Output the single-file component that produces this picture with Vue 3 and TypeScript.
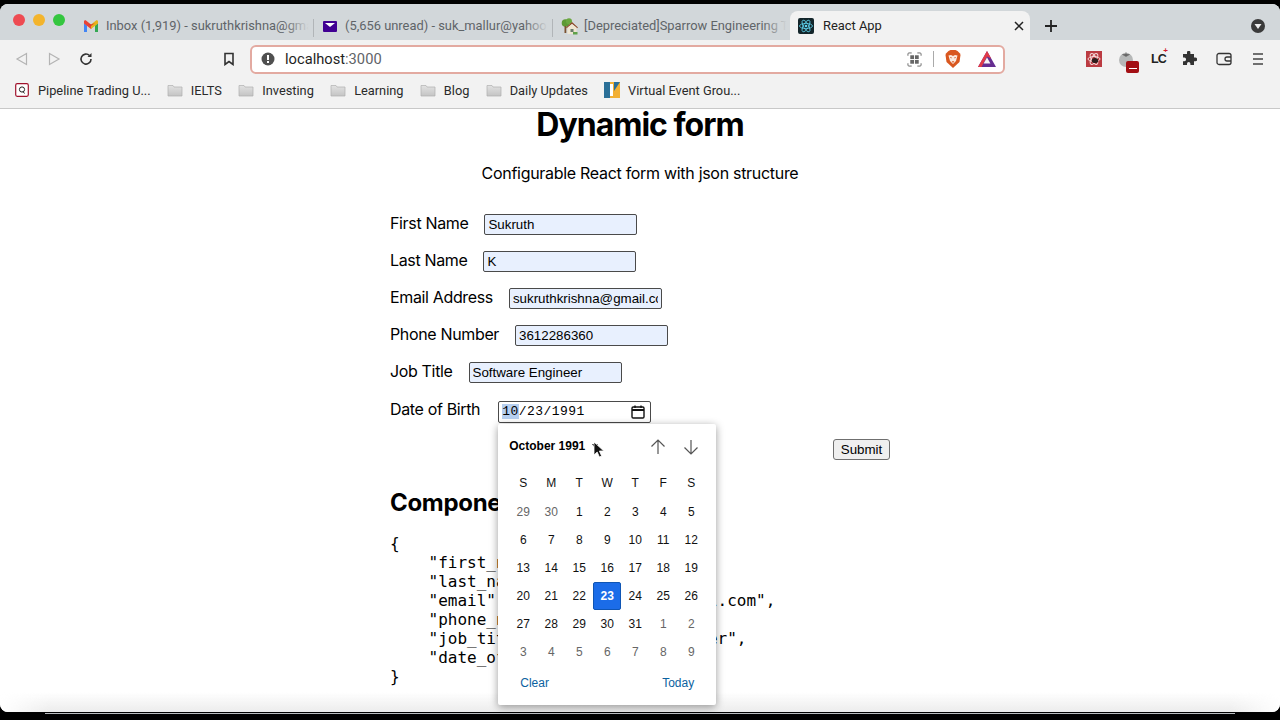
<script setup lang="ts">
interface Field { label: string; value: string }
interface Tab { title: string; icon: string; width: number }
interface Mark { label: string; icon: string }
interface Day { n: number; muted?: boolean; selected?: boolean }

const tabs: Tab[] = [
  { title: 'Inbox (1,919) - sukruthkrishna@gmail.com', icon: 'gmail', width: 239 },
  { title: '(5,656 unread) - suk_mallur@yahoo.com', icon: 'yahoo', width: 239 },
  { title: '[Depreciated]Sparrow Engineering Team', icon: 'home', width: 239 },
]
const marks: Mark[] = [
  { label: 'Pipeline Trading U...', icon: 'q' },
  { label: 'IELTS', icon: 'folder' },
  { label: 'Investing', icon: 'folder' },
  { label: 'Learning', icon: 'folder' },
  { label: 'Blog', icon: 'folder' },
  { label: 'Daily Updates', icon: 'folder' },
  { label: 'Virtual Event Grou...', icon: 'flag' },
]
const fields: Field[] = [
  { label: 'First Name', value: 'Sukruth' },
  { label: 'Last Name', value: 'K' },
  { label: 'Email Address', value: 'sukruthkrishna@gmail.com' },
  { label: 'Phone Number', value: '3612286360' },
  { label: 'Job Title', value: 'Software Engineer' },
]
const weekdays = ['S', 'M', 'T', 'W', 'T', 'F', 'S']
const days: Day[] = [
  ...[29, 30].map((n) => ({ n, muted: true })),
  ...Array.from({ length: 31 }, (_, i) => ({ n: i + 1, selected: i + 1 === 23 })),
  ...[1, 2, 3, 4, 5, 6, 7, 8, 9].map((n) => ({ n, muted: true })),
]
const json = `{
    "first_name": "Sukruth",
    "last_name": "K",
    "email": "sukruthkrishna@gmail.com",
    "phone_number": "3612286360",
    "job_title": "Software Engineer",
    "date_of_birth": "1991-10-23"
}`
</script>

<template>
  <div class="screen">
    <div class="window">
      <div class="tabbar">
        <div class="lights">
          <span class="light red"></span><span class="light yellow"></span><span class="light green"></span>
        </div>
        <div v-for="t in tabs" :key="t.icon" class="tab" :style="{ width: t.width + 'px' }">
          <svg v-if="t.icon === 'gmail'" class="fav" viewBox="0 0 16 16">
            <path d="M1 5v9h3V7.500z" fill="#4285f4" />
            <path d="M12 7.500V14h3V5z" fill="#34a853" />
            <path d="M1 3.500C1 2.500 2.500 2 3.300 2.700L8 6.500l1 3-1 1.500L1 5.500z" fill="#ea4335" />
            <path d="M8 6.500l4.700-3.800C13.500 2 15 2.500 15 3.500v2L8 11z" fill="#e8b21c" />
            <path d="M12 4.900 8 8 5 6l3 .5z" fill="#d93a2f" />
          </svg>
          <svg v-else-if="t.icon === 'yahoo'" class="fav" viewBox="0 0 16 16">
            <rect x="1" y="3" width="14" height="11" rx="1" fill="#410093" />
            <path d="M3 5h10L8 9z" fill="#fff" />
          </svg>
          <svg v-else class="fav home" viewBox="0 0 17 18">
            <circle cx="4.500" cy="6" r="3.800" fill="#5d9a34" />
            <circle cx="8" cy="4.200" r="3" fill="#6aa83f" />
            <path d="M3.500 9h1.800v7H3.500z" fill="#7a5230" />
            <path d="M5 10.500 11 5l6 5.500-1 .8L11 7l-5 4.300z" fill="#8c4a2b" />
            <path d="M6.500 10.500 11 7l4.500 3.500V17h-9z" fill="#efe6d2" />
            <path d="M9.500 12h3v3h-3z" fill="#6b7b6d" />
            <path d="M12 15h4.500v2.500H12z" fill="#5fa24a" />
          </svg>
          <span class="tab-title">{{ t.title }}</span>
          <span class="tab-fade"></span>
        </div>
        <div class="tab active">
          <svg class="fav" viewBox="0 0 16 16">
            <rect width="16" height="16" rx="2" fill="#14262b" />
            <g fill="none" stroke="#5fd3ee" stroke-width=".8">
              <ellipse cx="8" cy="8" rx="6.500" ry="2.600" />
              <ellipse cx="8" cy="8" rx="6.500" ry="2.600" transform="rotate(60 8 8)" />
              <ellipse cx="8" cy="8" rx="6.500" ry="2.600" transform="rotate(120 8 8)" />
            </g>
            <circle cx="8" cy="8" r="1.300" fill="#5fd3ee" />
          </svg>
          <span class="tab-title dark">React App</span>
          <svg class="close" viewBox="0 0 10 10"><path d="M1 1l8 8M9 1l-8 8" stroke="#222" stroke-width="1.500" /></svg>
        </div>
        <svg class="plus" viewBox="0 0 14 14"><path d="M7 1v12M1 7h12" stroke="#222" stroke-width="1.800" /></svg>
        <svg class="tab-menu" viewBox="0 0 16 16">
          <circle cx="8" cy="8" r="7" fill="#3a3a3a" />
          <path d="M4.500 6h7L8 11z" fill="#eee" />
        </svg>
      </div>

      <div class="toolbar">
        <svg class="nav first" viewBox="0 0 14 14"><path d="M11.500 1.500v11L2 7z" fill="none" stroke="#b4b4b4" stroke-width="1.200" /></svg>
        <svg class="nav" viewBox="0 0 14 14"><path d="M2.500 1.500v11L12 7z" fill="none" stroke="#b4b4b4" stroke-width="1.200" /></svg>
        <svg class="nav" viewBox="0 0 14 14"><path d="M12 7a5 5 0 1 1-1.500-3.500" fill="none" stroke="#333" stroke-width="1.600" /><path d="M12.500 1v4h-4z" fill="#333" /></svg>
        <svg class="bookmark" viewBox="0 0 12 14"><path d="M2 1.500h8v11L6 9.500l-4 3z" fill="none" stroke="#333" stroke-width="1.600" /></svg>
        <div class="omnibox">
          <svg class="info" viewBox="0 0 14 14">
            <circle cx="7" cy="7" r="6.500" fill="#505050" />
            <rect x="6" y="3" width="2" height="5" fill="#fff" />
            <rect x="6" y="9" width="2" height="2" fill="#fff" />
          </svg>
          <span class="url">localhost<span class="port">:3000</span></span>
          <svg class="qr" viewBox="0 0 16 16">
            <path d="M1 4V2a1 1 0 0 1 1-1h3M11 1h3a1 1 0 0 1 1 1v2M15 12v2a1 1 0 0 1-1 1h-3M5 15H2a1 1 0 0 1-1-1v-2" fill="none" stroke="#666" stroke-width="1" />
            <rect x="3.500" y="3.500" width="4" height="4" fill="#666" /><rect x="8.500" y="3.500" width="4" height="4" fill="#666" />
            <rect x="3.500" y="8.500" width="4" height="4" fill="#666" /><rect x="8.500" y="8.500" width="4" height="4" fill="#666" />
          </svg>
          <span class="omni-sep"></span>
          <svg class="brave" viewBox="0 0 16 18">
            <path d="M3.500 1 5.500 0h5l2 1L15 3.500l.5 1.500-1 7L8 18l-6.500-6-1-7L1 3.500z" fill="#d9571f" />
            <path d="M3.500 5.500 6 5l2 1 2-1 2.500.5-1.500 5.500L8 14l-3-3z" fill="#fbeadf" />
            <path d="M4.800 7l2 .6-.6 1zM11.200 7l-2 .6.600 1z" fill="#c74a18" />
            <path d="M6.700 11.300h2.600L8 13z" fill="#d9571f" />
          </svg>
          <svg class="bat" viewBox="0 0 18 16">
            <path d="M9 0 18 16H0z" fill="#662d91" />
            <path d="M9 0l4.200 7.500L9 5.500 5.500 12 3.600 16H0z" fill="#e23b48" />
            <path d="M9 6.500l3.400 6H5.600z" fill="#f6f6f6" />
          </svg>
        </div>
        <div class="ext-group">
          <svg class="ext first-ext" viewBox="0 0 16 16">
            <rect width="16" height="16" fill="#bb3b42" />
            <g fill="none" stroke="#f3d6d6" stroke-width="1">
              <ellipse cx="8" cy="8" rx="6" ry="2.500" />
              <ellipse cx="8" cy="8" rx="6" ry="2.500" transform="rotate(60 8 8)" />
              <ellipse cx="8" cy="8" rx="6" ry="2.500" transform="rotate(120 8 8)" />
            </g>
            <ellipse cx="9" cy="9.500" rx="3.200" ry="2.600" fill="#2f1d1d" />
          </svg>
          <div class="tomato">
            <svg viewBox="0 0 16 16">
              <circle cx="8" cy="9" r="7" fill="#b6b8b8" />
              <path d="M8 1v2M4.500 3.500 8 3l3.500.5L8 5.500z" fill="#666" stroke="#666" stroke-width=".6" />
            </svg>
            <span class="tomato-badge"><span class="tomato-bar"></span></span>
          </div>
          <span class="lc">LC<span class="lc-plus">+</span></span>
          <svg class="ext puzzle" viewBox="0 0 16 16">
            <path d="M6 1.500a1.700 1.700 0 0 1 3.400 0V3H13v3.600h1.400a1.800 1.800 0 0 1 0 3.600H13V14H9.400v-1.300a1.700 1.700 0 0 0-3.400 0V14H2v-3.800h1.300a1.800 1.800 0 0 0 0-3.600H2V3h4z" fill="#333" />
          </svg>
          <svg class="ext" viewBox="0 0 16 16">
            <rect x="1" y="2.500" width="14" height="11" rx="2" fill="none" stroke="#333" stroke-width="1.300" />
            <path d="M15 6h-4a2 2 0 0 0 0 4h4" fill="none" stroke="#333" stroke-width="1.300" />
          </svg>
          <svg class="ext" viewBox="0 0 16 16">
            <path d="M3 3h10M3 8h10M3 13h10" stroke="#444" stroke-width="1.500" />
          </svg>
        </div>
      </div>

      <div class="bookmarks">
        <div v-for="m in marks" :key="m.label" class="mark">
          <svg v-if="m.icon === 'q'" class="mark-icon small" viewBox="0 0 14 14">
            <rect x=".7" y=".7" width="12.600" height="12.600" rx="1.500" fill="#fff" stroke="#a0122c" stroke-width="1.200" />
            <circle cx="7" cy="6.500" r="2.600" fill="none" stroke="#222" stroke-width="1" />
            <path d="M8 8.500l1.500 2" stroke="#222" stroke-width="1" />
          </svg>
          <svg v-else-if="m.icon === 'folder'" class="mark-icon" viewBox="0 0 16 14">
            <defs>
              <linearGradient id="fold" x1="0" y1="0" x2="0" y2="1">
                <stop offset="0" stop-color="#e2e2e2" /><stop offset="1" stop-color="#c4c4c4" />
              </linearGradient>
            </defs>
            <path d="M1 2.500h5l1 1.500h8v9H1z" fill="url(#fold)" stroke="#b0b0b0" stroke-width=".7" />
          </svg>
          <svg v-else class="mark-icon tall" viewBox="0 0 16 16">
            <rect width="16" height="16" fill="#f2b035" />
            <path d="M0 0h6v16H0z" fill="#2a6f97" />
            <path d="M16 0 10 9V0z" fill="#2a6f97" />
            <path d="M6 2h3v12H6z" fill="#fff" />
          </svg>
          <span>{{ m.label }}</span>
        </div>
      </div>

      <main class="page">
        <h1>Dynamic form</h1>
        <p class="lead">Configurable React form with json structure</p>
        <form class="form" @submit.prevent>
          <div v-for="f in fields" :key="f.label" class="row">
            <label class="label">{{ f.label }}</label>
            <input class="input" type="text" readonly :value="f.value" />
          </div>
          <div class="row last">
            <label class="label">Date of Birth</label>
            <div class="date">
              <span class="date-text"><span class="seg">10</span>/23/1991</span>
              <svg class="cal-icon" viewBox="0 0 14 14">
                <rect x="1" y="2" width="12" height="11" rx="1.200" fill="none" stroke="#111" stroke-width="1.400" />
                <path d="M1 5h12" stroke="#111" stroke-width="2" />
                <path d="M4 .5v2.500M10 .5v2.500" stroke="#111" stroke-width="1.400" />
              </svg>
              <div class="popup">
                <div class="popup-head">
                  <span class="month">October 1991</span>
                  <span class="caret"></span>
                  <svg class="arrow up" viewBox="0 0 16 16"><path d="M8 15V1M1.500 7.500 8 1l6.500 6.500" fill="none" stroke="#555" stroke-width="1.200" /></svg>
                  <svg class="arrow down" viewBox="0 0 16 16"><path d="M8 1v14M1.500 8.500 8 15l6.500-6.500" fill="none" stroke="#555" stroke-width="1.200" /></svg>
                  <svg class="cursor" viewBox="0 0 12 18">
                    <path d="M1 1v13l3.200-3 2.200 5 2.200-1-2.200-5h4.400z" fill="#111" stroke="#fff" stroke-width=".8" />
                  </svg>
                </div>
                <div class="grid">
                  <span v-for="(w, i) in weekdays" :key="i" class="cell">{{ w }}</span>
                </div>
                <div class="grid days">
                  <span
                    v-for="(d, i) in days"
                    :key="i"
                    class="cell"
                    :class="{ muted: d.muted, selected: d.selected }"
                  >{{ d.n }}</span>
                </div>
                <div class="popup-foot"><span>Clear</span><span>Today</span></div>
              </div>
            </div>
          </div>
          <button class="submit" type="button">Submit</button>
        </form>
        <h2>Component state</h2>
        <pre class="json">{{ json }}</pre>
      </main>
      <div class="page-edge"></div>
    </div>
    <div class="bottom-line"></div>
  </div>
</template>

<style>
html, body { margin: 0; background: #000; }
</style>

<style scoped>
.screen {
  width: 1280px;
  height: 720px;
  overflow: hidden;
  background: #000;
  display: flex;
  flex-direction: column;
  font-family: "Liberation Sans", Arial, sans-serif;
}
.window {
  margin-top: 4px;
  height: 708px;
  flex: none;
  position: relative;
  display: flex;
  flex-direction: column;
  overflow: hidden;
  border-radius: 8px;
  background: #fff;
}
.bottom-line { height: 1px; margin: 1px 45px 0; background: #b9bcc0; flex: none; }

.tabbar {
  height: 36px;
  flex: none;
  background: #d2d7da;
  display: flex;
  align-items: flex-end;
  position: relative;
}
.lights { display: flex; gap: 8px; width: 75px; padding-left: 13px; box-sizing: border-box; align-self: flex-start; margin-top: 10px; }
.light { width: 12px; height: 12px; border-radius: 50%; }
.red { background: #ee4b52; }
.yellow { background: #f3b42c; }
.green { background: #34c63f; }
.tab {
  height: 29px;
  display: flex;
  align-items: center;
  position: relative;
  box-sizing: border-box;
  padding-left: 8px;
  overflow: hidden;
  flex: none;
}
.tab:not(.active)::after {
  content: "";
  position: absolute;
  right: 0;
  top: 8px;
  bottom: 3px;
  width: 1px;
  background: #b1b5b8;
}
.tab-fade {
  position: absolute;
  right: 1px;
  top: 0;
  bottom: 0;
  width: 28px;
  background: linear-gradient(90deg, rgba(210, 215, 218, 0), #d2d7da 85%);
}
.fav { width: 16px; height: 16px; flex: none; margin-right: 7px; }
.home { width: 17px; height: 18px; margin-right: 6px; }
.tab-title { font-size: 12.9px; color: #5f6468; white-space: nowrap; font-family: Roboto, "Liberation Sans", sans-serif; }
.tab-title.dark { color: #222; }
.tab.active {
  width: 240px;
  margin-left: -2px;
  background: #f2f2f2;
  border-radius: 8px 8px 0 0;
}
.active .fav { margin-right: 9px; }
.close { width: 10px; height: 10px; position: absolute; right: 6px; top: 10px; }
.plus { width: 14px; height: 14px; margin: 0 0 7px 14px; flex: none; }
.tab-menu { width: 16px; height: 16px; position: absolute; right: 14px; top: 14px; }

.toolbar {
  height: 38px;
  flex: none;
  background: #f2f2f2;
  display: flex;
  align-items: center;
  box-sizing: border-box;
  padding-left: 15px;
}
.nav { width: 14px; height: 14px; margin-right: 18px; flex: none; }
.bookmark { width: 12px; height: 14px; margin-left: 112px; margin-right: 15px; flex: none; }
.omnibox {
  width: 755px;
  height: 29px;
  box-sizing: border-box;
  border: 2px solid #e3aaa1;
  border-radius: 6px;
  background: #fff;
  display: flex;
  align-items: center;
  padding-left: 9px;
  flex: none;
}
.info { width: 14px; height: 14px; flex: none; margin-right: 10px; }
.url { font-size: 14.7px; color: #1f1f1f; font-family: Roboto, "Liberation Sans", sans-serif; }
.port { color: #5f6368; }
.qr { width: 15px; height: 15px; margin-left: auto; flex: none; }
.omni-sep { width: 1px; height: 16px; background: #aaa; margin: 0 11px; }
.brave { width: 16px; height: 18px; flex: none; margin-right: 17px; }
.bat { width: 18px; height: 16px; flex: none; margin-right: 7px; }
.ext-group {
  display: flex;
  align-items: center;
  margin-left: 81px;
}
.ext { width: 16px; height: 16px; flex: none; margin-right: 18px; }
.first-ext { margin-right: 16px; }
.puzzle { margin-right: 19px; }
.tomato { width: 16px; height: 16px; position: relative; margin-right: 17px; flex: none; }
.tomato svg { width: 16px; height: 16px; display: block; }
.tomato-badge {
  position: absolute;
  left: 8px;
  top: 10px;
  width: 13px;
  height: 12px;
  background: #a30f14;
  border-radius: 2px;
  display: flex;
  align-items: center;
  justify-content: center;
}
.tomato-bar { width: 8px; height: 1px; background: #fff; margin-top: 2px; }
.lc { font-size: 12.5px; font-weight: 700; color: #222; width: 16px; margin-right: 14px; position: relative; letter-spacing: -1px; flex: none; }
.lc-plus { position: absolute; right: 0; top: -6px; font-size: 8px; color: #d02030; }

.bookmarks {
  height: 31px;
  flex: none;
  box-sizing: border-box;
  background: #f2f2f2;
  border-bottom: 1px solid #c8c8c8;
  display: flex;
  align-items: center;
  padding: 0 0 6px 15px;
  font-size: 12.8px;
  font-family: Roboto, "Liberation Sans", sans-serif;
  color: #2a2a2a;
}
.mark { display: flex; align-items: center; margin-right: 16.3px; white-space: nowrap; }
.mark-icon { width: 16px; height: 14px; margin-right: 8px; flex: none; }
.mark-icon.small { width: 14px; height: 14px; margin-right: 9px; }
.mark-icon.tall { height: 16px; }

.page {
  flex: 1;
  min-height: 0;
  position: relative;
  background: #fff;
  color: #000;
}
h1 {
  margin: -3px 0 0;
  font: 700 32px/37px Inter, "Liberation Sans", sans-serif;
  letter-spacing: -1px;
  text-align: center;
}
.lead {
  margin: 21px 0 0;
  font: 16px/18px Inter, "Liberation Sans", sans-serif;
  letter-spacing: -.3px;
  text-align: center;
}
.form {
  width: 500px;
  margin: 32px auto 0;
  display: flex;
  flex-direction: column;
}
.row {
  display: flex;
  align-items: center;
  height: 21px;
  margin-bottom: 16px;
}
.row.last { margin-top: 1px; }
.label {
  font: 16px/18px Inter, "Liberation Sans", sans-serif;
  letter-spacing: -.35px;
  margin-right: 16px;
  white-space: nowrap;
  position: relative;
  top: -2px;
}
.input {
  width: 153px;
  height: 21px;
  box-sizing: border-box;
  border: 1px solid #4a4a4a;
  border-radius: 2px;
  background: #e8f0fe;
  padding: 1px 3px;
  font: 13.33px "Liberation Sans", Arial, sans-serif;
  color: #000;
  outline: none;
  margin: 0;
}
.date {
  width: 153px;
  height: 22px;
  box-sizing: border-box;
  border: 1px solid #4a4a4a;
  border-radius: 2px;
  background: #fff;
  display: flex;
  align-items: center;
  padding: 0 5px 0 3px;
  position: relative;
  margin: 2px 0 0 2px;
}
.date-text { font: 13px "Liberation Mono", monospace; letter-spacing: .45px; }
.seg { background: #b6cff0; }
.cal-icon { width: 14px; height: 14px; margin-left: auto; }
.submit {
  align-self: flex-end;
  width: 57px;
  height: 21px;
  margin-top: 2px;
  padding: 0;
  box-sizing: border-box;
  border: 1px solid #6f6f6f;
  border-radius: 3px;
  background: #efefef;
  font: 13.33px "Liberation Sans", Arial, sans-serif;
  color: #000;
}
h2 {
  margin: 29px 0 0;
  padding-left: 390px;
  font: 700 24px/28px Inter, "Liberation Sans", sans-serif;
  letter-spacing: -.3px;
}
.json {
  margin: 17px 0 0;
  padding-left: 390px;
  font: 16px/19px "DejaVu Sans Mono", monospace;
}
.page-edge {
  position: absolute;
  left: 0;
  right: 0;
  bottom: 0;
  height: 20px;
  background: linear-gradient(180deg, rgba(236, 236, 236, 0), #ececec);
  -webkit-mask-image: linear-gradient(90deg, transparent, #000 50px, #000 calc(100% - 50px), transparent);
  mask-image: linear-gradient(90deg, transparent, #000 50px, #000 calc(100% - 50px), transparent);
  pointer-events: none;
}

.popup {
  position: absolute;
  left: -1px;
  top: 22px;
  width: 218px;
  height: 281px;
  box-sizing: border-box;
  background: #fff;
  border-radius: 2px;
  box-shadow: 0 2px 8px rgba(0, 0, 0, .4);
  z-index: 2;
  padding: 0 11px;
}
.popup-head {
  height: 45px;
  display: flex;
  align-items: center;
  position: relative;
}
.month { font-size: 12px; font-weight: 700; }
.caret {
  width: 0;
  height: 0;
  margin-left: 7px;
  border-left: 3px solid transparent;
  border-right: 3px solid transparent;
  border-top: 4px solid #111;
}
.arrow { width: 16px; height: 16px; margin-top: 2px; }
.arrow.up { margin-left: auto; margin-right: 17px; }
.arrow.down { margin-right: 6px; }
.cursor { position: absolute; left: 84px; top: 17px; width: 12px; height: 18px; }
.grid {
  display: grid;
  grid-template-columns: repeat(7, 28px);
  grid-auto-rows: 28px;
}
.days { margin-top: 1px; }
.cell {
  display: flex;
  align-items: center;
  justify-content: center;
  font-size: 12px;
  color: #111;
  box-sizing: border-box;
}
.muted { color: #666; }
.selected {
  background: #1b6ce8;
  border: 1px solid #0f55b4;
  border-radius: 2px;
  color: #fff;
  font-weight: 700;
}
.popup-foot {
  display: flex;
  justify-content: space-between;
  font-size: 12px;
  color: #0b62a0;
  padding: 10px 11px 0 11px;
}
</style>
